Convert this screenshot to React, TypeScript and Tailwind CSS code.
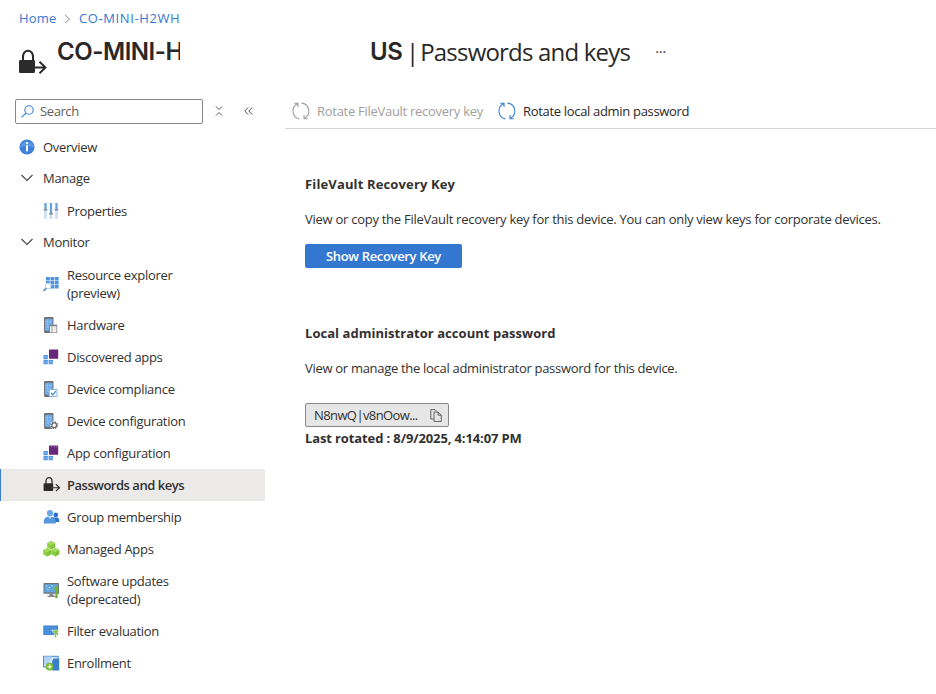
import type { ReactNode } from "react";

type IconProps = { size?: number };

function LockIcon({ size = 18 }: IconProps) {
  return (
    <svg width={size} height={size} viewBox="0 0 30 30" fill="none" className="shrink-0">
      <path d="M5 13V8.5a5 5.8 0 0 1 10 0V13" stroke="#2b2b2b" strokeWidth="2.1" />
      <rect x="1" y="12" width="16" height="13" rx="1.2" fill="#2b2b2b" />
      <path d="M17 19.5h10.5M21.5 13.8l6 5.7-6 5.7" stroke="#2b2b2b" strokeWidth="1.9" />
    </svg>
  );
}

function InfoIcon() {
  return (
    <svg width="16" height="16" viewBox="0 0 16 16">
      <circle cx="8" cy="8" r="7.6" fill="#3f83d8" />
      <path d="M.9 8.5a7.2 7.2 0 0 1 14.2 0Q8 5.5.9 8.5z" fill="#5b98e2" />
      <circle cx="8" cy="4.2" r="1.1" fill="#fff" />
      <rect x="7" y="6.3" width="2" height="6" fill="#fff" />
    </svg>
  );
}

function ChevronIcon() {
  return (
    <svg width="14" height="8" viewBox="0 0 14 8" fill="none" stroke="#444" strokeWidth="1.1" className="ml-px">
      <path d="M1.5 1l5.5 5.5L12.5 1" />
    </svg>
  );
}

function SlidersIcon() {
  return (
    <svg width="16" height="16" viewBox="0 0 16 16">
      {[2.5, 8, 13.5].map((x, i) => (
        <g key={x}>
          <rect x={x - 1.3} y="0" width="2.6" height="16" fill="#c9def2" />
          <rect x={x - 1} y="0" width="2" height={i === 1 ? 10 : 6} fill="#60a3e0" />
          <rect x={x - 1.8} y={i === 1 ? 10 : 6} width="3.6" height="1.5" fill="#8b8b8b" />
        </g>
      ))}
    </svg>
  );
}

function ExplorerIcon() {
  return (
    <svg width="16" height="16" viewBox="0 0 16 16">
      {[1, 5, 9].map((y) =>
        [3, 7.4, 11.8].map((x) => (
          <rect key={`${x}-${y}`} x={x} y={y} width="3.8" height="3.5" fill="#4f93df" />
        )),
      )}
      <circle cx="5.2" cy="10" r="2.9" fill="#fff" stroke="#a6cbed" strokeWidth=".8" />
      <path d="M3.2 12.2L.5 15" stroke="#3c80d0" strokeWidth="1.5" />
    </svg>
  );
}

function DeviceIcon({ children }: { children?: ReactNode }) {
  return (
    <svg width="16" height="16" viewBox="0 0 16 16">
      <rect x="1" y="0" width="9.5" height="16" rx="1" fill="#6f7379" />
      <rect x="2" y="2" width="7.5" height="11.7" fill="#6fadeb" />
      <path d="M3.5 4.5h1M6.5 4.5h1M3.5 7h1M6.5 8h1M4.5 10h1" stroke="#d3e7fa" />
      {children}
    </svg>
  );
}

function HardwareIcon() {
  return (
    <DeviceIcon>
      <rect x="6.2" y="7.6" width="8" height="8.4" fill="#808389" />
      <rect x="7" y="9.3" width="6.4" height="6" fill="#fafafa" />
      <path d="M9 9.5v5.7" stroke="#888b90" strokeWidth=".9" />
      <path d="M10.6 10.8h2M10.6 12.7h2" stroke="#c4c4c4" strokeWidth=".6" />
    </DeviceIcon>
  );
}

function ComplianceIcon() {
  return (
    <DeviceIcon>
      <rect x="6.2" y="8.4" width="7.8" height="7.2" fill="#fff" stroke="#72acdf" strokeWidth=".8" />
      <path d="M8 11.8l1.8 2 3-3.7" stroke="#3381d0" strokeWidth="1.1" fill="none" />
    </DeviceIcon>
  );
}

function DeviceConfigIcon() {
  return (
    <DeviceIcon>
      <circle cx="11.2" cy="12.2" r="3.9" fill="#fff" />
      <circle cx="11.2" cy="12.2" r="3.1" fill="none" stroke="#707378" strokeWidth="1.6" strokeDasharray="1.4 1.03" />
      <circle cx="11.2" cy="12.2" r="2.3" fill="#fff" stroke="#707378" strokeWidth="1.2" />
    </DeviceIcon>
  );
}

function AppsIcon({ config = false }: { config?: boolean }) {
  return (
    <svg width="16" height="16" viewBox="0 0 16 16">
      <path d="M.5 6h4.3v4.2H.5zM.5 11h4.3v4.3H.5zM5.6 11h4.3v4.3H5.6z" fill="#5097e0" />
      <path d="M1.7 8h2M1.7 13h2M6.8 13h2" stroke="#a4ccf4" strokeWidth="1" />
      <rect x="6" y=".5" width="9.2" height="9.3" rx=".6" fill="#682878" />
      {config && <path d="M8 1.8h1M11 1.8h1M13.3 1.8h1" stroke="#c4a0cd" strokeWidth=".8" />}
    </svg>
  );
}

function GroupIcon() {
  return (
    <svg width="17" height="16" viewBox="0 0 17 16">
      <circle cx="12.8" cy="5.9" r="2.3" fill="#2c70c9" />
      <path d="M9.5 13V10.5q0-2 2-2H14q2.2 0 2.2 3V13z" fill="#2c70c9" />
      <circle cx="7" cy="4.2" r="3.1" fill="#69a7e5" />
      <path d="M.6 14.4q.2-6.7 4-6.7h4.6q3.4.5 3.7 6.7z" fill="#5697dc" />
      <path d="M5.5 7.7L7 10.2l1.5-2.5z" fill="#d6e8f8" />
    </svg>
  );
}

function CubesIcon() {
  return (
    <svg width="17" height="16" viewBox="0 0 17 16">
      {[[8.2, 4.2], [4.2, 11.2], [12.3, 11.2]].map(([x, y]) => (
        <g key={`${x}-${y}`} transform={`translate(${x} ${y})`}>
          <path d="M0-4l3.8 2v4L0 4l-3.8-2v-4z" fill="#8fce44" stroke="#8fce44" strokeWidth=".6" strokeLinejoin="round" />
          <path d="M0-4l3.8 2L0 0l-3.8-2z" fill="#a5dc60" />
          <path d="M0 0v4l3.8-2v-4z" fill="#80bf38" />
        </g>
      ))}
    </svg>
  );
}

function UpdatesIcon() {
  return (
    <svg width="17" height="16" viewBox="0 0 17 16">
      <rect x=".5" y="1" width="15.5" height="10.8" rx=".5" fill="#6c7177" />
      <rect x="1.5" y="2.2" width="13.5" height="8.2" fill="#62a7df" />
      <path d="M3 4h1M6 5.5h1M8.5 3.8h1M4.5 7.5h1" stroke="#d7eafa" />
      <path d="M6.5 11.8h4v2h2v1.2h-8v-1.2h2z" fill="#85898d" />
      <path d="M13.5 3.8L16.4 7.6h-1.8V16h-2.3V7.6h-1.8z" fill="#6eb52e" />
    </svg>
  );
}

function FilterIcon() {
  return (
    <svg width="17" height="16" viewBox="0 0 17 16">
      <rect x=".3" y="2.5" width="14.7" height="9.5" fill="#3f86d7" />
      <path d="M2 5h11M2 7.5h9M2 10h8" stroke="#7db4eb" strokeWidth=".8" strokeDasharray="1.4 1" />
      <path d="M8.6 7.2h8l-3 3.4v3.7l-2 .8v-4.5z" fill="#82c33b" stroke="#fff" strokeWidth=".6" />
    </svg>
  );
}

function EnrollmentIcon() {
  return (
    <svg width="17" height="16" viewBox="0 0 17 16">
      <rect x=".6" y="1.3" width="14.5" height="10.6" fill="#d8eafa" stroke="#3f87d7" strokeWidth="1" />
      <path d="M1 1.5h8L5.2 9H1z" fill="#b0d3f3" />
      <path d="M10.4 3.6h5.8v11.8h-7V6z" fill="#397fce" />
      <circle cx="6.6" cy="11.6" r="3.9" fill="#72b52e" />
      <path d="M6.6 9.3v4.6M4.3 11.6h4.6" stroke="#fff" strokeWidth="1.3" />
    </svg>
  );
}

function RotateIcon({ color }: { color: string }) {
  return (
    <svg width="18" height="18" viewBox="0 0 18 18" fill="none" stroke={color} strokeWidth="1.1">
      <path d="M7.4 16.9A8 8 0 0 1 5.6 1.8M2.2 1.2h3.8v3.8" />
      <path d="M9.4 1.1a8 8 0 0 1 3 15.1M15.8 16.8H12V13" />
    </svg>
  );
}

function CopyIcon() {
  return (
    <svg width="12" height="13" viewBox="0 0 12 13" fill="none" stroke="#555" strokeWidth=".9">
      <path d="M4 10H.8V.6H5l1.6 1.6" />
      <path d="M4 3h4l3.3 3.2v6.2H4zM8 3v3.2h3.3" />
    </svg>
  );
}

type Item = { label: string; second?: string; icon: ReactNode; cls: string; top?: boolean; active?: boolean };

const items: Item[] = [
  { label: "Overview", icon: <InfoIcon />, cls: "h-[31px]", top: true },
  { label: "Manage", icon: <ChevronIcon />, cls: "h-[32px]", top: true },
  { label: "Properties", icon: <SlidersIcon />, cls: "h-[33px]" },
  { label: "Monitor", icon: <ChevronIcon />, cls: "h-[30px]", top: true },
  { label: "Resource explorer", second: "(preview)", icon: <ExplorerIcon />, cls: "h-[52px] pt-0.5" },
  { label: "Hardware", icon: <HardwareIcon />, cls: "h-8" },
  { label: "Discovered apps", icon: <AppsIcon />, cls: "h-8" },
  { label: "Device compliance", icon: <ComplianceIcon />, cls: "h-8" },
  { label: "Device configuration", icon: <DeviceConfigIcon />, cls: "h-8" },
  { label: "App configuration", icon: <AppsIcon config />, cls: "h-8" },
  { label: "Passwords and keys", icon: <LockIcon />, cls: "h-8", active: true },
  { label: "Group membership", icon: <GroupIcon />, cls: "h-8" },
  { label: "Managed Apps", icon: <CubesIcon />, cls: "h-8" },
  { label: "Software updates", second: "(deprecated)", icon: <UpdatesIcon />, cls: "h-[50px]" },
  { label: "Filter evaluation", icon: <FilterIcon />, cls: "h-8" },
  { label: "Enrollment", icon: <EnrollmentIcon />, cls: "h-8" },
];

function NavItem({ item }: { item: Item }) {
  return (
    <li
      className={`flex items-center ${item.cls} ${item.top ? "pl-[19px]" : "pl-[43px]"} ${
        item.active
          ? "bg-[#ebeae9] font-semibold tracking-[-0.48px] shadow-[inset_1px_0_0_#3a7bd5]"
          : "tracking-[-0.3px]"
      }`}
    >
      <span className="flex w-6 shrink-0 items-center">{item.icon}</span>
      <span className="leading-[18px] whitespace-nowrap">
        {item.label}
        {item.second && <span className="block">{item.second}</span>}
      </span>
    </li>
  );
}

export default function App() {
  return (
    <div className="h-[694px] w-[936px] overflow-hidden bg-white font-['Open_Sans',sans-serif] text-[13px] text-[#323130]">
      <nav className="flex h-9 items-center pt-px pl-[19px] text-[#3478cf]">
        <a className="w-[38px] tracking-[0.2px]">Home</a>
        <svg width="7" height="10" viewBox="0 0 7 10" fill="none" stroke="#888" className="mr-2 ml-[7px]">
          <path d="M1 .8L5.5 5 1 9.2" />
        </svg>
        <a className="tracking-[0.6px]">CO-MINI-H2WH</a>
      </nav>

      <header className="flex h-[51px] pl-[18px]">
        <div className="w-[39px] pt-3">
          <LockIcon size={30} />
        </div>
        <h1 className="flex text-2xl leading-8 whitespace-nowrap text-[#292827]">
          <span className="w-[123px] overflow-hidden font-['Inter',sans-serif] font-semibold tracking-[-0.45px]">
            CO-MINI-H
          </span>
          <span className="ml-[190px] w-[34px] font-['Inter',sans-serif] font-semibold tracking-[-0.3px]">US</span>
          <span className="ml-0.5">|</span>
          <span className="ml-px w-[210px] tracking-[-0.8px]">Passwords and keys</span>
        </h1>
        <span className="ml-[25px] text-sm leading-8">···</span>
      </header>

      <div className="flex">
        <aside className="w-[265px] shrink-0">
          <div className="flex h-12 items-center pl-[15px]">
            <div className="flex h-[25px] w-[188px] items-center gap-1.5 rounded-xs border border-[#8a8886] pl-[5px] text-[#605e5c]">
              <svg width="13" height="13" viewBox="0 0 13 13" fill="none" stroke="#3a80d2" strokeWidth="1.1">
                <circle cx="8" cy="5" r="4.2" />
                <path d="M5 8L.6 12.4" />
              </svg>
              <span className="pt-0.5 tracking-[-0.4px]">Search</span>
            </div>
            <svg width="8" height="10" viewBox="0 0 8 10" fill="none" stroke="#555" className="ml-3">
              <path d="M1 .5l3 3 3-3M1 9.5l3-3 3 3" />
            </svg>
            <svg width="9" height="8" viewBox="0 0 9 8" fill="none" stroke="#555" className="ml-[21px]">
              <path d="M4.2.5L.8 4l3.4 3.5M8.2.5L4.8 4l3.4 3.5" />
            </svg>
          </div>
          <ul className="-mt-1">
            {items.map((item) => (
              <NavItem key={item.label} item={item} />
            ))}
          </ul>
        </aside>

        <main className="ml-5 flex-1">
          <div className="flex h-[42px] items-center border-b border-[#d6d5d4] pt-[7px] pl-[7px] tracking-[-0.28px] text-[#292827]">
            <span className="flex items-center gap-[7px] text-[#a19f9d]">
              <RotateIcon color="#a19f9d" />
              <span className="pt-0.5">Rotate FileVault recovery key</span>
            </span>
            <span className="ml-[15px] flex items-center gap-[7px]">
              <RotateIcon color="#3a80d2" />
              <span className="pt-0.5 tracking-[-0.32px]">Rotate local admin password</span>
            </span>
          </div>

          <section className="pt-[46px] pl-5 leading-[18px] whitespace-nowrap">
            <h2 className="font-bold tracking-[0.14px]">FileVault Recovery Key</h2>
            <p className="mt-[17px] tracking-[-0.265px]">
              View or copy the FileVault recovery key for this device. You can only view keys for corporate devices.
            </p>
            <button className="mt-4 h-6 w-[157px] rounded-xs bg-[#3477d0] font-semibold tracking-[-0.33px] text-white">
              Show Recovery Key
            </button>
          </section>

          <section className="pt-14 pl-5 leading-[18px] whitespace-nowrap">
            <h2 className="font-bold tracking-[0.04px]">Local administrator account password</h2>
            <p className="mt-[17px] tracking-[-0.3px]">
              View or manage the local administrator password for this device.
            </p>
            <div className="mt-[26px] flex h-6 w-[144px] items-center justify-between rounded-xs border border-[#8a8886] bg-[#e6e6e6] pr-1.5 pl-2">
              <span className="tracking-[-0.6px]">N8nwQ|v8nOow...</span>
              <CopyIcon />
            </div>
            <p className="mt-0.5 font-bold tracking-[-0.12px]">Last rotated : 8/9/2025, 4:14:07 PM</p>
          </section>
        </main>
      </div>
    </div>
  );
}
